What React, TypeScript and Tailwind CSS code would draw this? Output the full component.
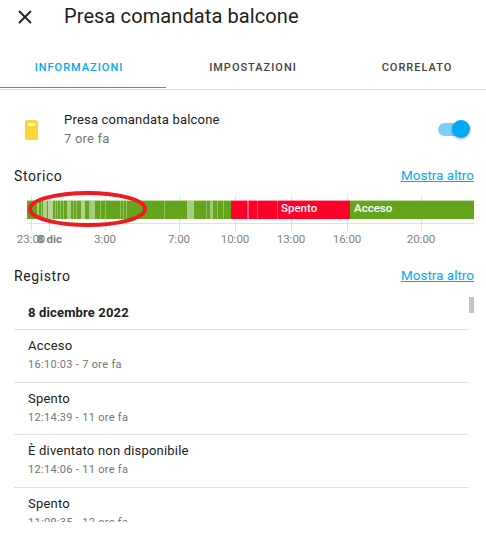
import { X } from "lucide-react";

// stripes in the first green run: [x, width, opacity]
const STRIPES: [number, number, number][] = [
  [37, 2, 0.45], [41, 1, 0.35], [43, 4, 0.5], [48, 5, 0.55], [55, 1, 0.35], [57, 1, 0.3], [60, 1, 0.35],
  [63, 1, 0.35], [67, 4, 0.45], [73, 1, 0.3], [76, 1, 0.35], [81, 4, 0.5], [89, 2, 0.4], [91, 4, 0.45],
  [100, 1, 0.3], [105, 1, 0.3], [120, 1, 0.3], [123, 1, 0.3], [126, 1, 0.3], [164, 1, 0.3],
  [187, 7, 0.45], [206, 1, 0.3], [210, 3, 0.4], [217, 1, 0.3], [223, 1, 0.3]
];

const RED_STRIPES: [number, number, number][] = [
  [247, 2, 0.4], [257, 1, 0.3], [277, 1, 0.3]
];

const TICKS = [31, 49, 105, 179, 235, 291, 347, 421];

const LABELS = [
  { x: 31, text: "23:00" },
  { x: 105, text: "3:00" },
  { x: 179, text: "7:00" },
  { x: 235, text: "10:00" },
  { x: 291, text: "13:00" },
  { x: 347, text: "16:00" },
  { x: 421, text: "20:00" }
];

const LOGBOOK = [
  { title: "Acceso", time: "16:10:03 - 7 ore fa" },
  { title: "Spento", time: "12:14:39 - 11 ore fa" },
  { title: "È diventato non disponibile", time: "12:14:06 - 11 ore fa" },
  { title: "Spento", time: "11:09:35 - 12 ore fa" }
];

function SectionHeader({ title }: { title: string }) {
  return (
    <div className="flex h-5 items-center justify-between pl-[14px] pr-3">
      <span className="text-[14px] tracking-[0.6px] text-[#212121]">{title}</span>
      <a className="pb-[2px] text-[13.5px] text-[#03a9f4] underline">Mostra altro</a>
    </div>
  );
}

function Timeline() {
  return (
    <svg viewBox="0 0 486 58" className="mt-[2px] block h-[58px] w-[486px]">
      {TICKS.map((x) => (
        <rect key={x} x={x} y="8" width="1" height="35" fill="#e0e0e0" />
      ))}
      <rect x="27" y="35" width="447" height="1" fill="#e0e0e0" />
      <rect x="27" y="12.6" width="204" height="18.4" fill="#65a51d" />
      <rect x="231" y="12.6" width="119" height="18.4" fill="#ff0029" />
      <rect x="350" y="12.6" width="124" height="18.4" fill="#65a51d" />
      {[...STRIPES, ...RED_STRIPES].map(([x, width, opacity]) => (
        <rect key={x} x={x} y="12.6" width={width} height="18.4" fill="#ffffff" opacity={opacity} />
      ))}
      <text x="281" y="24" fontSize="11.5" fontWeight="500" fill="#ffffff">Spento</text>
      <text x="354" y="24" fontSize="11.5" fontWeight="500" fill="#ffffff">Acceso</text>
      {LABELS.map((label) => (
        <text key={label.text} x={label.x} y="55" fontSize="11.5" textAnchor="middle" fill="#7f7f7f">
          {label.text}
        </text>
      ))}
      <text x="37" y="55" fontSize="11.5" fontWeight="700" fill="#7f7f7f">8 dic</text>
      <ellipse cx="87.5" cy="21" rx="57.5" ry="16" fill="none" stroke="#ed1c24" strokeWidth="4" />
    </svg>
  );
}

export default function App() {
  return (
    <div className="h-[544px] w-[486px] overflow-hidden bg-white font-['Roboto',sans-serif]">
      <header className="flex h-[34px] items-center pl-[14px]">
        <X size={22} strokeWidth={2} className="text-[#212121]" />
        <h1 className="ml-7 pb-[2px] text-[20px] font-normal leading-6 tracking-[0.1px] text-[#212121]">
          Presa comandata balcone
        </h1>
      </header>

      <nav className="mt-4 flex h-10 items-start border-b border-[#e0e0e0] text-[11px] font-medium tracking-[1px]">
        <div className="flex h-[38px] w-[166px] items-center justify-center border-b border-[#03a9f4] pb-px pr-2 text-[#03a9f4]">
          INFORMAZIONI
        </div>
        <div className="flex h-[38px] w-[174px] items-center justify-center pb-[2px] text-[#424242]">
          IMPOSTAZIONI
        </div>
        <div className="flex h-[38px] flex-1 items-center justify-center pb-[2px] pl-[8px] text-[#424242]">
          CORRELATO
        </div>
      </nav>

      <section className="mt-[19px] flex h-10 items-center pl-[25px] pr-4">
        <svg viewBox="0 0 13 20" className="mt-[2px] h-5 w-[13px]">
          <rect width="13" height="20" rx="2" fill="#fdd835" />
          <rect x="3" y="3" width="7" height="3" fill="#fff6c8" />
        </svg>
        <div className="ml-[26px] flex-1">
          <div className="text-[13px] leading-5 tracking-[0.2px] text-[#212121]">Presa comandata balcone</div>
          <div className="text-[13px] leading-[18px] tracking-[0.2px] text-[#757575]">7 ore fa</div>
        </div>
        <div className="flex items-center">
          <div className="h-[13px] w-7 rounded-full bg-[#7bd0f9]" />
          <div className="-ml-[14px] h-[18px] w-[18px] rounded-full bg-[#03a9f4] shadow-[0_1px_3px_rgba(0,0,0,0.35)]" />
        </div>
      </section>

      <div className="mt-[17px]">
        <SectionHeader title="Storico" />
        <Timeline />
      </div>

      <div className="mt-5">
        <SectionHeader title="Registro" />
      </div>

      <div className="mt-[10px] flex h-[226px] pl-[14px] pr-3">
        <div className="h-full flex-1 overflow-hidden">
          <div className="flex h-[34px] items-center border-b border-[#e0e0e0] pl-[14px] text-[13px] font-bold tracking-[0.15px] text-[#212121]">
            8 dicembre 2022
          </div>
          {LOGBOOK.map((entry) => (
            <div key={entry.time} className="h-[52.67px] border-b border-[#e0e0e0] pl-[14px] pt-[6px]">
              <div className="text-[13px] leading-5 tracking-[0.2px] text-[#212121]">{entry.title}</div>
              <div className="text-[11px] leading-[18px] tracking-[0.3px] text-[#757575]">{entry.time}</div>
            </div>
          ))}
        </div>
        <div className="mt-px h-4 w-[5px] bg-[#c4c4c4]" />
      </div>
    </div>
  );
}
